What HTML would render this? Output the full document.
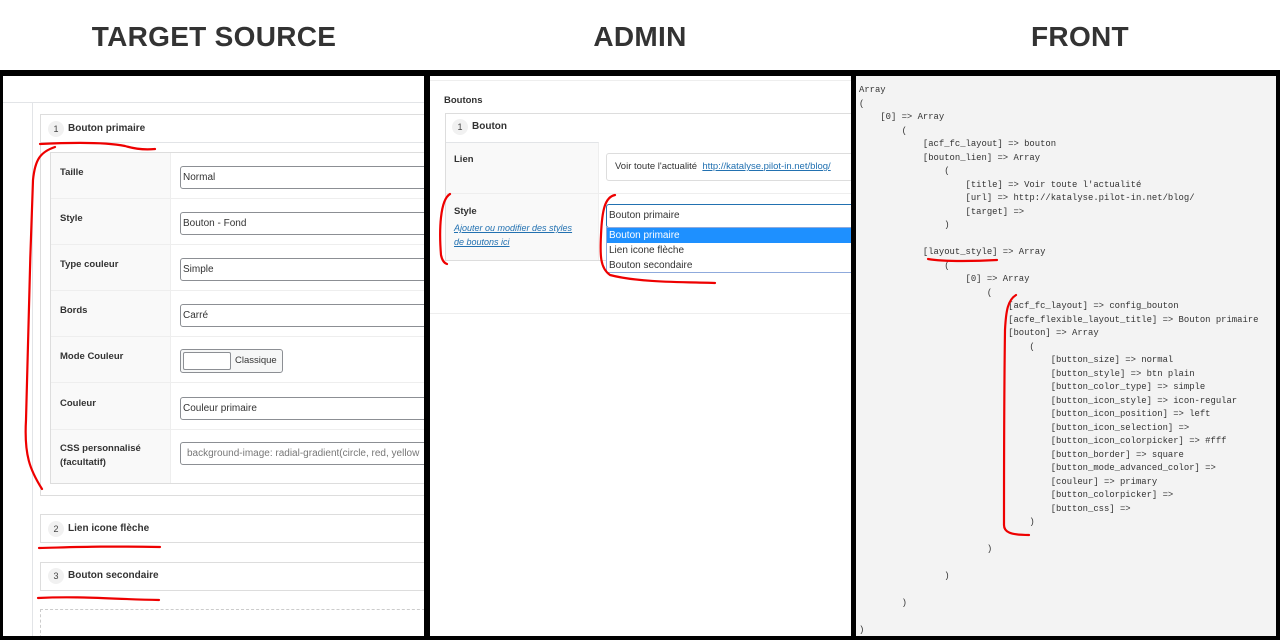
<!DOCTYPE html>
<html><head><meta charset="utf-8"><style>
*{margin:0;padding:0;box-sizing:border-box}
body{width:1280px;height:640px;background:#fff;position:relative;overflow:hidden;font-family:"Liberation Sans",Arial,sans-serif;color:#23282d}
.h{position:absolute;top:22px;font-weight:bold;font-size:28px;color:#333;letter-spacing:0.3px;text-align:center;line-height:30px}
.frame{position:absolute;top:70px;left:0;width:1280px;height:570px;background:#000}
.p{position:absolute;top:76px;height:560px;overflow:hidden}
.a{position:absolute}
.box{position:absolute;border:1px solid #ddd;background:#fff}
.num{position:absolute;width:16px;height:16px;border-radius:8px;background:#f1f1f1;font-size:9px;text-align:center;line-height:16px;color:#444}
.ttl{position:absolute;font-size:10px;font-weight:bold;color:#333}
.lab{position:absolute;font-size:9.5px;font-weight:bold;color:#333;line-height:14px}
.inp{position:absolute;border:1px solid #8c8f94;border-radius:3px;background:#fff;font-size:10px;color:#333;padding-left:2px;line-height:22px;height:23px}
pre{font-family:"Liberation Mono",monospace;font-size:8.9px;line-height:13.5px;color:#333;position:absolute;left:3px;top:8px}
</style></head><body>
<div class="h" style="left:64px;width:300px">TARGET SOURCE</div>
<div class="h" style="left:540px;width:200px">ADMIN</div>
<div class="h" style="left:980px;width:200px">FRONT</div>
<div class="frame"></div>

<!-- LEFT -->
<div class="p" style="left:3px;width:421px;background:#fff">
 <div class="a" style="left:0;top:26px;width:421px;height:1px;background:#e2e4e7"></div>
 <div class="a" style="left:29px;top:26px;width:1px;height:540px;background:#e2e4e7"></div>
 <div class="box" style="left:37px;top:38px;width:400px;height:382px"></div>
 <div class="a" style="left:37px;top:66px;width:400px;height:1px;background:#e2e4e7"></div>
 <div class="num" style="left:45px;top:45px">1</div>
 <div class="ttl" style="left:65px;top:47px">Bouton primaire</div>
 <div class="box" style="left:47px;top:76px;width:390px;height:332px;background:#fff"></div>
 <div class="a" style="left:48px;top:77px;width:120px;height:330px;background:#f9f9f9;border-right:1px solid #eee"></div>
 <div class="lab" style="left:57px;top:90px">Taille</div>
 <div class="lab" style="left:57px;top:136px">Style</div>
 <div class="lab" style="left:57px;top:182px">Type couleur</div>
 <div class="lab" style="left:57px;top:228px">Bords</div>
 <div class="lab" style="left:57px;top:274px">Mode Couleur</div>
 <div class="lab" style="left:57px;top:321px">Couleur</div>
 <div class="lab" style="left:57px;top:366px">CSS personnalisé<br>(facultatif)</div>
 <div class="a" style="left:48px;top:122px;width:390px;height:1px;background:#eee"></div>
 <div class="a" style="left:48px;top:168px;width:390px;height:1px;background:#eee"></div>
 <div class="a" style="left:48px;top:214px;width:390px;height:1px;background:#eee"></div>
 <div class="a" style="left:48px;top:260px;width:390px;height:1px;background:#eee"></div>
 <div class="a" style="left:48px;top:306px;width:390px;height:1px;background:#eee"></div>
 <div class="a" style="left:48px;top:353px;width:390px;height:1px;background:#eee"></div>
 <div class="inp" style="left:177px;top:90px;width:260px">Normal</div>
 <div class="inp" style="left:177px;top:136px;width:260px">Bouton - Fond</div>
 <div class="inp" style="left:177px;top:182px;width:260px">Simple</div>
 <div class="inp" style="left:177px;top:228px;width:260px">Carré</div>
 <div class="a" style="left:177px;top:273px;width:103px;height:24px;border:1px solid #8c8f94;border-radius:3px;background:#f6f7f7;font-size:9.5px;color:#333;line-height:22px;padding-left:54px">Classique</div>
 <div class="a" style="left:180px;top:276px;width:48px;height:18px;border:1px solid #8c8f94;background:#fff;border-radius:2px"></div>
 <div class="inp" style="left:177px;top:321px;width:260px">Couleur primaire</div>
 <div class="inp" style="left:177px;top:366px;width:260px;color:#777;padding-left:6px">background-image: radial-gradient(circle, red, yellow</div>
 <div class="box" style="left:37px;top:438px;width:400px;height:29px"></div>
 <div class="num" style="left:45px;top:445px">2</div>
 <div class="ttl" style="left:65px;top:447px">Lien icone flèche</div>
 <div class="box" style="left:37px;top:486px;width:400px;height:29px"></div>
 <div class="num" style="left:45px;top:492px">3</div>
 <div class="ttl" style="left:65px;top:494px">Bouton secondaire</div>
 <div class="a" style="left:37px;top:533px;width:400px;height:40px;border:1px dashed #ccc"></div>
</div>

<!-- ADMIN -->
<div class="p" style="left:430px;width:421px;background:#fff">
 <div class="a" style="left:0;top:4px;width:421px;height:1px;background:#eee"></div>
 <div class="a" style="left:14px;top:19px;font-size:9.5px;font-weight:bold;color:#333">Boutons</div>
 <div class="box" style="left:15px;top:37px;width:420px;height:148px"></div>
 <div class="num" style="left:22px;top:43px">1</div>
 <div class="ttl" style="left:42px;top:45px">Bouton</div>
 <div class="a" style="left:16px;top:66px;width:153px;height:118px;background:#f9f9f9;border-right:1px solid #eee;border-top:1px solid #e2e4e7"></div>
 <div class="a" style="left:16px;top:117px;width:420px;height:1px;background:#eee"></div>
 <div class="lab" style="left:24px;top:77px">Lien</div>
 <div class="lab" style="left:24px;top:129px">Style</div>
 <div class="a" style="left:24px;top:145px;font-size:9px;font-style:italic;color:#2271b1;text-decoration:underline;line-height:14px">Ajouter ou modifier des styles<br>de boutons ici</div>
 <div class="a" style="left:176px;top:77px;width:250px;height:28px;border:1px solid #ddd;border-radius:3px;background:#fff;font-size:9.5px;color:#333;line-height:26px;padding-left:8px">Voir toute l'actualité &nbsp;<span style="color:#2271b1;text-decoration:underline">http://katalyse.pilot-in.net/blog/</span></div>
 <div class="a" style="left:176px;top:128px;width:250px;height:24px;border:1px solid #2271b1;border-radius:3px;background:#fff;font-size:10px;color:#333;line-height:22px;padding-left:2px">Bouton primaire</div>
 <div class="a" style="left:176px;top:151px;width:250px;height:46px;border:1px solid #8faadc;background:#fff;font-size:10px;line-height:15px">
  <div style="background:#1e90ff;color:#fff;padding-left:2px">Bouton primaire</div>
  <div style="color:#333;padding-left:2px">Lien icone flèche</div>
  <div style="color:#333;padding-left:2px">Bouton secondaire</div>
 </div>
 <div class="a" style="left:0;top:237px;width:421px;height:1px;background:#eee"></div>
</div>

<!-- FRONT -->
<div class="p" style="left:856px;width:420px;background:#f3f3f3">
<pre>Array
(
    [0] =&gt; Array
        (
            [acf_fc_layout] =&gt; bouton
            [bouton_lien] =&gt; Array
                (
                    [title] =&gt; Voir toute l'actualité
                    [url] =&gt; http://katalyse.pilot-in.net/blog/
                    [target] =&gt; 
                )

            [layout_style] =&gt; Array
                (
                    [0] =&gt; Array
                        (
                            [acf_fc_layout] =&gt; config_bouton
                            [acfe_flexible_layout_title] =&gt; Bouton primaire
                            [bouton] =&gt; Array
                                (
                                    [button_size] =&gt; normal
                                    [button_style] =&gt; btn plain
                                    [button_color_type] =&gt; simple
                                    [button_icon_style] =&gt; icon-regular
                                    [button_icon_position] =&gt; left
                                    [button_icon_selection] =&gt; 
                                    [button_icon_colorpicker] =&gt; #fff
                                    [button_border] =&gt; square
                                    [button_mode_advanced_color] =&gt; 
                                    [couleur] =&gt; primary
                                    [button_colorpicker] =&gt; 
                                    [button_css] =&gt; 
                                )

                        )

                )

        )

)</pre>
</div>

<svg width="1280" height="640" style="position:absolute;left:0;top:0" fill="none" stroke="#e00" stroke-width="2.2" stroke-linecap="round">
 <path d="M40 144 C80 142 110 143 125 146 C135 149 145 150 155 149"/>
 <path d="M55 147 C40 152 35 160 33 180 C30 260 28 330 26 420 C24 455 30 470 42 489"/>
 <path d="M39 548 C80 547 100 546 160 547"/>
 <path d="M38 598 C80 596 110 599 159 600"/>
 <path d="M450 194 C440 200 439 230 441 255 C442 260 444 263 447 264"/>
 <path d="M615 195 C605 197 602 210 601 235 C600 255 600 268 610 275 C640 283 690 282 715 283"/>
 <path d="M928 259 C945 262 980 261 997 260"/>
 <path d="M1016 295 C1008 300 1006 310 1005 330 C1004 400 1004 470 1004 525 C1004 532 1010 535 1029 535"/>
</svg>
</body></html>
